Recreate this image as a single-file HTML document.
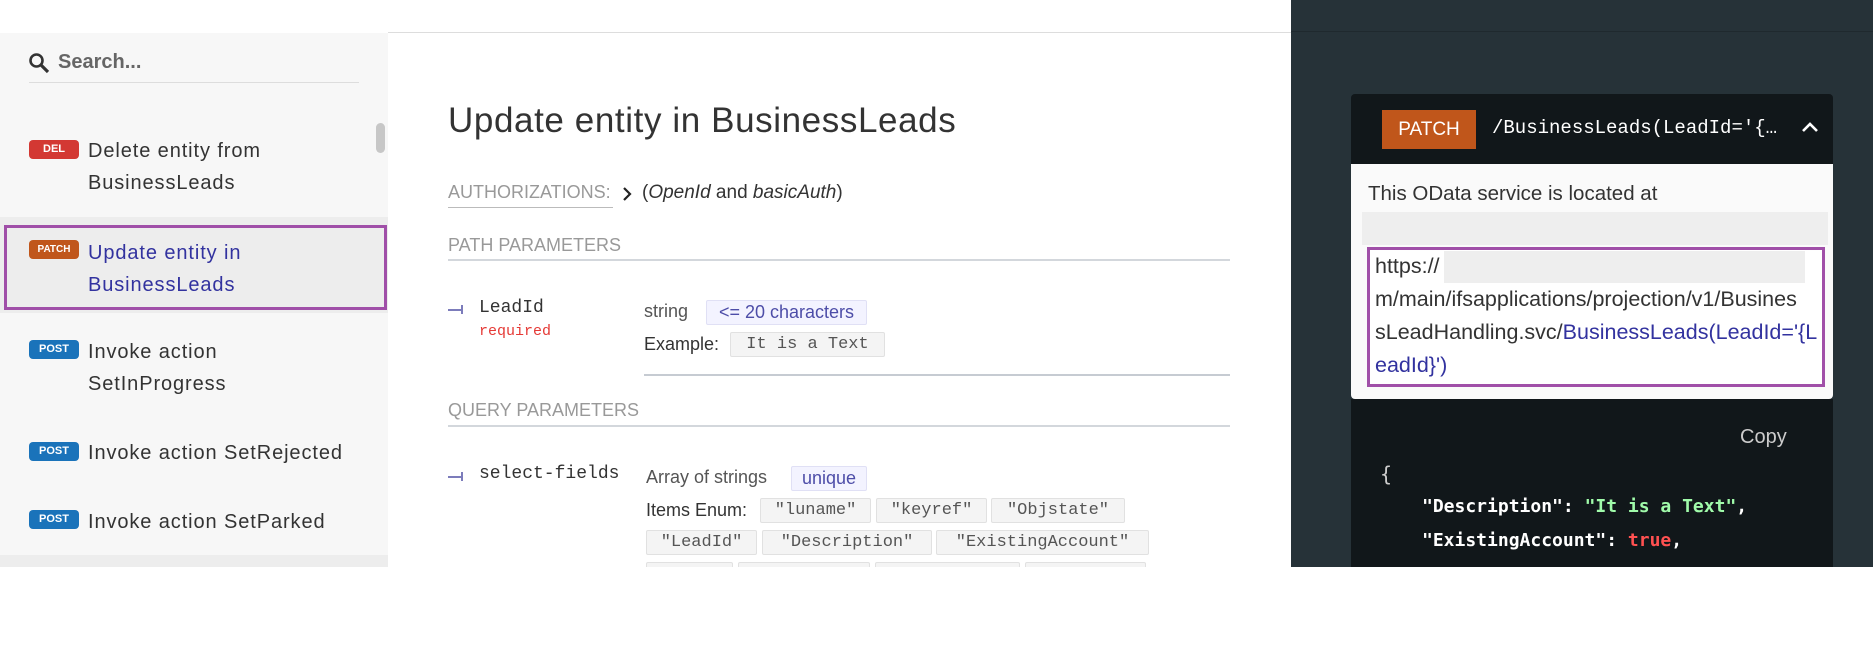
<!DOCTYPE html>
<html><head><meta charset="utf-8"><style>
*{margin:0;padding:0;box-sizing:border-box}
body{width:1873px;height:648px;background:#fff;position:relative;overflow:hidden;font-family:"Liberation Sans",sans-serif}
.a{position:absolute;white-space:nowrap}
.side{left:0;top:33px;width:388px;height:534px;background:#f7f7f7}
.badge{position:absolute;left:29px;width:50px;height:19px;border-radius:4px;color:#fff;font-weight:bold;font-size:11px;text-align:center;line-height:19px}
.del{background:#d33833}.post{background:#1a73ba}.patch{background:#c0561b;font-size:10px}
.it{position:absolute;left:88px;font-size:20px;letter-spacing:0.9px;color:#333;line-height:32px}
.mono{font-family:"Liberation Mono",monospace}
.chip{position:absolute;background:#f4f4f4;border:1px solid #e1e1e1;border-radius:2px;font-family:"Liberation Mono",monospace;font-size:17px;color:#555;text-align:center;line-height:23px;height:25px}
.hline{position:absolute;height:2px;background:#d3d7dc}
.gray{color:#999;font-size:18px}
.code{font-family:"DejaVu Sans Mono","Liberation Mono",monospace;font-weight:bold;font-size:18px;color:#fff}
</style></head><body>
<!-- sidebar -->
<div class="a side"></div>
<div class="a" style="left:0;top:555px;width:388px;height:12px;background:#ededed"></div>
<svg class="a" style="left:28px;top:52px" width="22" height="22" viewBox="0 0 22 22"><circle cx="8.5" cy="8.5" r="6" fill="none" stroke="#333" stroke-width="2.6"/><path d="M13 13 L20 20" stroke="#333" stroke-width="3.2"/></svg>
<div class="a" style="left:58px;top:51px;font-size:20px;font-weight:bold;color:#666">Search...</div>
<div class="a" style="left:29px;top:82px;width:330px;height:1px;background:#ddd"></div>
<div class="a" style="left:376px;top:123px;width:9px;height:30px;border-radius:5px;background:#c7c7c7"></div>
<div class="badge del" style="top:140px">DEL</div>
<div class="it" style="top:135px">Delete entity from<br>BusinessLeads</div>
<div class="a" style="left:0;top:217px;width:388px;height:96px;background:#ededed"></div>
<div class="a" style="left:4px;top:225px;width:383px;height:85px;border:3px solid #a04fa8"></div>
<div class="badge patch" style="top:240px">PATCH</div>
<div class="it" style="top:237px;color:#32329f">Update entity in<br>BusinessLeads</div>
<div class="badge post" style="top:340px">POST</div>
<div class="it" style="top:336px">Invoke action<br>SetInProgress</div>
<div class="badge post" style="top:442px">POST</div>
<div class="it" style="top:437px">Invoke action SetRejected</div>
<div class="badge post" style="top:510px">POST</div>
<div class="it" style="top:506px">Invoke action SetParked</div>
<!-- main -->
<div class="a" style="left:388px;top:32px;width:903px;height:1px;background:#ddd"></div>
<div class="a" style="left:448px;top:101px;font-size:35px;letter-spacing:0.6px;color:#333">Update entity in BusinessLeads</div>
<div class="a gray" style="left:448px;top:182px">AUTHORIZATIONS:</div>
<div class="a" style="left:448px;top:207px;width:165px;height:1px;background:#bbb"></div>
<svg class="a" style="left:622px;top:186px" width="10" height="16"><path d="M2 2 L8 8 L2 14" fill="none" stroke="#222" stroke-width="2.2"/></svg>
<div class="a" style="left:642px;top:182px;font-size:19px;color:#333">(<i>OpenId</i> and <i>basicAuth</i>)</div>
<div class="a gray" style="left:448px;top:235px">PATH PARAMETERS</div>
<div class="hline" style="left:448px;top:259px;width:782px"></div>
<div class="a" style="left:448px;top:309px;width:14px;height:2px;background:#7c7cbb"></div>
<div class="a" style="left:461px;top:305px;width:2px;height:9px;background:#7c7cbb"></div>
<div class="a mono" style="left:479px;top:298px;font-size:18px;color:#333">LeadId</div>
<div class="a mono" style="left:479px;top:323px;font-size:15px;color:#e53935">required</div>
<div class="a" style="left:644px;top:301px;font-size:18px;color:#555">string</div>
<div class="a" style="left:706px;top:300px;width:161px;height:25px;background:#f3f3ff;border:1px solid #e0e0f5;border-radius:2px;color:#4d4da8;font-size:18px;text-align:center;line-height:23px">&lt;= 20 characters</div>
<div class="a" style="left:644px;top:334px;font-size:18px;color:#333">Example:</div>
<div class="chip" style="left:730px;top:332px;width:155px">It is a Text</div>
<div class="hline" style="left:644px;top:374px;width:586px;background:#c6cbd2"></div>
<div class="a gray" style="left:448px;top:400px">QUERY PARAMETERS</div>
<div class="hline" style="left:448px;top:425px;width:782px"></div>
<div class="a" style="left:448px;top:476px;width:14px;height:2px;background:#7c7cbb"></div>
<div class="a" style="left:461px;top:472px;width:2px;height:9px;background:#7c7cbb"></div>
<div class="a mono" style="left:479px;top:464px;font-size:18px;color:#333">select-fields</div>
<div class="a" style="left:646px;top:467px;font-size:18px;color:#555">Array of strings</div>
<div class="a" style="left:791px;top:466px;width:76px;height:25px;background:#f3f3ff;border:1px solid #e0e0f5;border-radius:2px;color:#4d4da8;font-size:18px;text-align:center;line-height:23px">unique</div>
<div class="a" style="left:646px;top:500px;font-size:18px;color:#333">Items Enum:</div>
<div class="chip" style="left:760px;top:498px;width:111px">"luname"</div>
<div class="chip" style="left:876px;top:498px;width:111px">"keyref"</div>
<div class="chip" style="left:991px;top:498px;width:134px">"Objstate"</div>
<div class="chip" style="left:646px;top:530px;width:111px">"LeadId"</div>
<div class="chip" style="left:762px;top:530px;width:170px">"Description"</div>
<div class="chip" style="left:936px;top:530px;width:213px">"ExistingAccount"</div>
<div class="a" style="left:646px;top:562px;width:500px;height:5px;overflow:hidden"><div style="display:flex;gap:5px"><div class="chip" style="position:static;width:90px"></div><div class="chip" style="position:static;width:136px"></div><div class="chip" style="position:static;width:150px"></div><div class="chip" style="position:static;width:125px"></div></div></div>
<!-- right panel -->
<div class="a" style="left:1291px;top:0;width:582px;height:567px;background:#263238"></div>
<div class="a" style="left:1291px;top:31px;width:582px;height:1px;background:#1f292e"></div>
<div class="a" style="left:1351px;top:94px;width:482px;height:70px;background:#11171a;border-radius:4px 4px 0 0"></div>
<div class="a" style="left:1382px;top:110px;width:94px;height:39px;background:#c0561b;color:#fff;font-size:19px;text-align:center;line-height:39px">PATCH</div>
<div class="a mono" style="left:1492px;top:117px;font-size:19px;color:#fff">/BusinessLeads(LeadId='{…</div>
<svg class="a" style="left:1801px;top:121px" width="18" height="12"><path d="M2 10 L9 3 L16 10" fill="none" stroke="#fff" stroke-width="2.6"/></svg>
<div class="a" style="left:1351px;top:164px;width:482px;height:235px;background:#fafafa;border-radius:0 0 4px 4px"></div>
<div class="a" style="left:1368px;top:182px;font-size:20.5px;color:#333">This OData service is located at</div>
<div class="a" style="left:1362px;top:212px;width:466px;height:33px;background:#eee"></div>
<div class="a" style="left:1367px;top:247px;width:458px;height:140px;background:#fff;border:3px solid #a04fa8"></div>
<div class="a" style="left:1444px;top:251px;width:361px;height:32px;background:#eee"></div>
<div class="a" style="left:1375px;top:250px;font-size:21.5px;color:#333;line-height:33px">https://<br>m/main/ifsapplications/projection/v1/Busines<br>sLeadHandling.svc/<span style="color:#32329f">BusinessLeads(LeadId='{L<br>eadId}')</span></div>
<div class="a" style="left:1351px;top:399px;width:482px;height:168px;background:#11171a"></div>
<div class="a" style="left:1740px;top:426px;font-size:20px;color:#ccc">Copy</div>
<div class="a code" style="left:1380px;top:462px;color:#ccc;font-weight:normal;font-size:20px">{</div>
<div class="a code" style="left:1422px;top:496px">"Description": <span style="color:#a0fbaa">"It is a Text"</span>,</div>
<div class="a code" style="left:1422px;top:530px">"ExistingAccount": <span style="color:#ff5151">true</span>,</div>
</body></html>
